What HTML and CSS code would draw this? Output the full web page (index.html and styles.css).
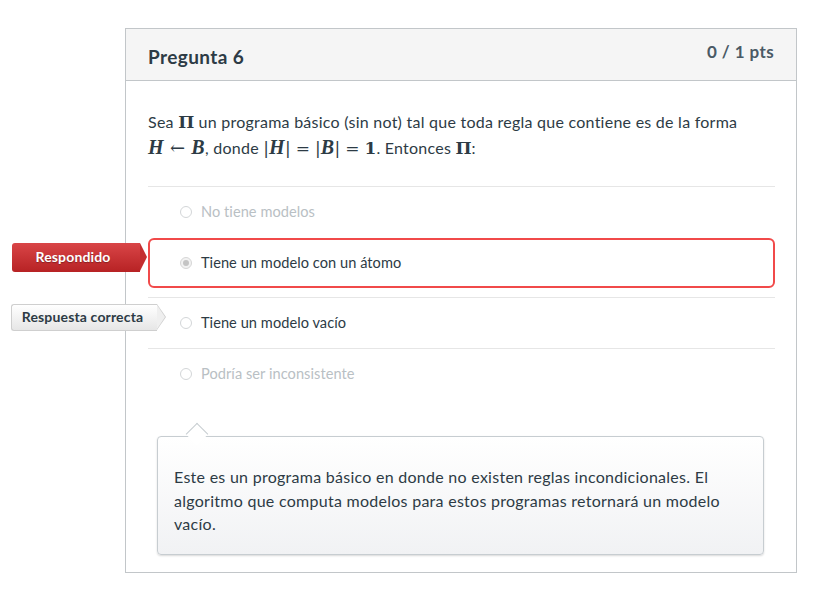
FILE: index.html
```html
<!DOCTYPE html>
<html lang="es">
<head>
<meta charset="utf-8">
<title>Pregunta 6</title>
<link rel="stylesheet" href="styles.css">
</head>
<body>
<div class="page">
  <div class="card">
    <div class="card-header">
      <h2 class="title">Pregunta 6</h2>
      <div class="pts">0 / 1 pts</div>
    </div>
    <div class="card-body">
      <p class="question">Sea <span class="m-pi">Π</span> un programa básico (sin not) tal que toda regla que contiene es de la forma<br><span class="m-it">H</span><span class="m-rel m-arrow">←</span><span class="m-it">B</span>, donde <span class="m-op">|</span><span class="m-it">H</span><span class="m-op">|</span><span class="m-rel">=</span><span class="m-op">|</span><span class="m-it">B</span><span class="m-op">|</span><span class="m-rel">=</span><span class="m-bf">1</span>. Entonces <span class="m-pi">Π</span>:</p>

      <div class="answers">
        <div class="answer disabled">
          <span class="radio"></span><span class="label">No tiene modelos</span>
        </div>
        <div class="answer selected">
          <span class="tag tag-red">Respondido</span>
          <span class="radio checked"></span><span class="label">Tiene un modelo con un átomo</span>
        </div>
        <div class="answer correct">
          <span class="tag tag-gray">Respuesta correcta</span>
          <span class="radio"></span><span class="label">Tiene un modelo vacío</span>
        </div>
        <div class="answer disabled">
          <span class="radio"></span><span class="label">Podría ser inconsistente</span>
        </div>
      </div>

      <div class="feedback">
        <p>Este es un programa básico en donde no existen reglas incondicionales. El algoritmo que computa modelos para estos programas retornará un modelo vacío.</p>
      </div>
    </div>
  </div>
</div>
</body>
</html>
```

FILE: styles.css
```css
* { box-sizing: border-box; }
html, body { margin: 0; padding: 0; background: #ffffff; }
body {
  font-family: Lato, "Helvetica Neue", "Liberation Sans", sans-serif;
  color: #2d3b45;
}
.page {
  padding: 28px 0 0 125px;
}
.card {
  width: 672px;
  border: 1px solid #c2c6c9;
  background: #fff;
  position: relative;
}
.card-header {
  height: 52px;
  background: #f5f5f5;
  border-bottom: 1px solid #c2c6c9;
  display: flex;
  justify-content: space-between;
  align-items: flex-start;
  padding: 0 22px 0 22px;
}
.title {
  margin: 16px 0 0 0;
  font-size: 19px;
  letter-spacing: 0.4px;
  font-weight: 700;
  line-height: 24px;
  color: #2d3b45;
}
.pts {
  margin-top: 13px;
  font-size: 17px;
  letter-spacing: 0.4px;
  font-weight: 700;
  line-height: 20px;
  color: #4a5a65;
}
.card-body {
  padding: 28px 21px 17px 22px;
}
.question {
  margin: 0 0 25px 0;
  font-size: 16px;
  letter-spacing: 0.25px;
  line-height: 25px;
  color: #2d3b45;
}
.m-pi {
  font-family: "DejaVu Serif", "Liberation Serif", serif;
  font-weight: 700;
  font-size: 17px;
  letter-spacing: 0;
}
.m-it {
  font-family: "Liberation Serif", "DejaVu Serif", serif;
  font-style: italic;
  font-weight: 700;
  font-size: 20px;
  letter-spacing: 0.5px;
}
.m-op {
  font-family: "DejaVu Serif", "Liberation Serif", serif;
  font-size: 17px;
  letter-spacing: 0;
}
.m-rel {
  font-family: "DejaVu Serif", "Liberation Serif", serif;
  font-size: 17px;
  letter-spacing: 0;
  margin: 0 5px;
}
.m-arrow {
  font-size: 18px;
  margin: 0 6px 0 6px;
}
.m-bf {
  font-family: "DejaVu Serif", "Liberation Serif", serif;
  font-weight: 700;
  font-size: 17px;
  letter-spacing: 0;
}
.answers {
  display: flex;
  flex-direction: column;
}
.answer {
  position: relative;
  display: flex;
  align-items: center;
  height: 51px;
  border-top: 1px solid #e6e6e6;
  padding-left: 32px;
  font-size: 14.6px;
  letter-spacing: 0.05px;
  color: #2d3b45;
}
.answer.disabled { color: #b9c0c4; }
.answer.selected {
  height: 50px;
  margin-top: 1px;
  margin-bottom: 9px;
  border: 2px solid #f14a4a;
  border-radius: 6px;
  padding-left: 30px;
}
.answer.selected + .answer { border-top: 1px solid #e6e6e6; }
.radio {
  width: 12px;
  height: 12px;
  border: 1px solid #d3d6d8;
  border-radius: 50%;
  background: #fff;
  margin-right: 9px;
  flex: none;
  position: relative;
}
.radio.checked {
  border-color: #d6d6d6;
  background: #f2f2f2;
}
.radio.checked::after {
  content: "";
  position: absolute;
  left: 2px;
  top: 2px;
  width: 6px;
  height: 6px;
  border-radius: 50%;
  background: #c4c4c4;
}
.label { line-height: 20px; }

.tag {
  position: absolute;
  display: flex;
  align-items: center;
  justify-content: center;
  font-size: 14px;
  letter-spacing: 0.15px;
  font-weight: 700;
  white-space: nowrap;
}
.tag-red {
  left: -138px;
  top: 3px;
  width: 128px;
  height: 29px;
  color: #fff;
  background: linear-gradient(#d94547, #b72224);
  border-radius: 3px 0 0 3px;
  text-shadow: 0 1px 1px rgba(0,0,0,0.3);
  padding-right: 6px;
  padding-bottom: 2px;
}
.tag-red::after {
  content: "";
  position: absolute;
  right: -7px;
  top: 0;
  border-top: 14.5px solid transparent;
  border-bottom: 14.5px solid transparent;
  border-left: 7px solid #c42e30;
}
.tag-gray {
  left: -137px;
  top: 6px;
  width: 146px;
  height: 27px;
  color: #2d3b45;
  background: linear-gradient(#ffffff, #e6e6e6);
  border: 1px solid #cfcfcf;
  border-right: none;
  border-radius: 3px 0 0 3px;
  padding-right: 4px;
  padding-bottom: 3px;
}
.tag-gray::before {
  content: "";
  position: absolute;
  right: -9px;
  top: -1px;
  border-top: 13.5px solid transparent;
  border-bottom: 13.5px solid transparent;
  border-left: 9px solid #cfcfcf;
}
.tag-gray::after {
  content: "";
  position: absolute;
  right: -8px;
  top: 0;
  border-top: 12.5px solid transparent;
  border-bottom: 12.5px solid transparent;
  border-left: 8px solid #efefef;
}

.feedback {
  position: relative;
  margin: 37px 11px 0 9px;
  background: linear-gradient(#ffffff, #f1f2f4);
  border: 1px solid #c7cdd1;
  border-radius: 4px;
  box-shadow: 0 1px 2px rgba(0,0,0,0.15);
  padding: 28px 16px 18px 16px;
}
.feedback::before {
  content: "";
  position: absolute;
  left: 31px;
  top: -11px;
  width: 15px;
  height: 15px;
  background: #fff;
  border-left: 1px solid #c7cdd1;
  border-top: 1px solid #c7cdd1;
  transform: rotate(45deg);
}
.feedback p {
  margin: 0;
  font-size: 16px;
  letter-spacing: 0.27px;
  line-height: 23.5px;
  color: #2d3b45;
  position: relative;
}
```
